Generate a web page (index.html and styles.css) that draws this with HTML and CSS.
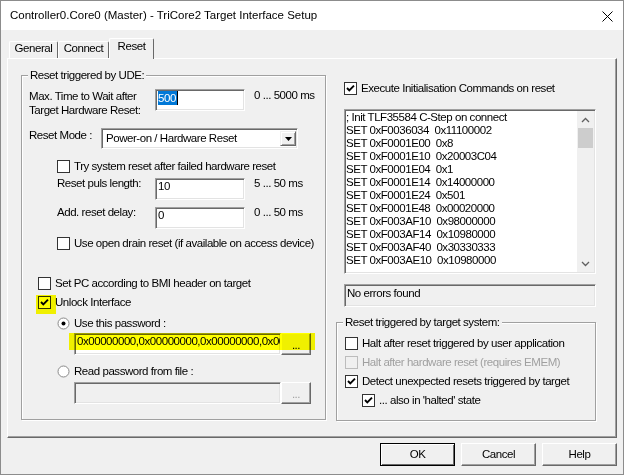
FILE: index.html
```html
<!DOCTYPE html>
<html lang="en">
  <head>
    <meta charset="UTF-8" />
    <title>TriCore2 Target Interface Setup</title>
    <link rel="stylesheet" href="styles.css">
  </head>
  <body>
    <div class="titlebar">
      <span class="title">Controller0.Core0 (Master) - TriCore2 Target Interface Setup</span>
      <svg class="close" width="11" height="11" viewBox="0 0 11 11">
        <path d="M0.5 0.5 L10.5 10.5 M10.5 0.5 L0.5 10.5" stroke="#000" stroke-width="1" fill="none" />
      </svg>
    </div>

    <div class="client">
      <div class="tabs">
        <div class="tab tab-general">General</div>
        <div class="tab tab-connect">Connect</div>
        <div class="tab tab-reset active">Reset</div>
      </div>

      <div class="panel">
        <!-- * LEFT GROUP -->
        <div class="group group-ude">
          <div class="group-title">Reset triggered by UDE:</div>

          <div class="row r-wait">
            <span class="lbl lbl-wait">Max. Time to Wait after<br>Target Hardware Reset:</span>
            <div class="edit"><span class="selected">500</span></div>
            <span class="range">0 ... 5000 ms</span>
          </div>

          <div class="row r-mode">
            <span class="lbl lbl-mode">Reset Mode :</span>
            <div class="combo">
              <span class="combo-text">Power-on / Hardware Reset</span>
              <span class="combo-btn">
                <svg width="7" height="4" viewBox="0 0 7 4"><path d="M0 0 H7 L3.5 4 Z" fill="#000" /></svg>
              </span>
            </div>
          </div>

          <div class="check r-try">
            <span class="cb"></span>
            <span>Try system reset after failed hardware reset</span>
          </div>

          <div class="row r-puls">
            <span class="lbl lbl-sub">Reset puls length:</span>
            <div class="edit"><span>10</span></div>
            <span class="range">5 ... 50 ms</span>
          </div>

          <div class="row r-delay">
            <span class="lbl lbl-sub">Add. reset delay:</span>
            <div class="edit"><span>0</span></div>
            <span class="range">0 ... 50 ms</span>
          </div>

          <div class="check r-drain">
            <span class="cb"></span>
            <span>Use open drain reset (if available on access device)</span>
          </div>

          <div class="check r-setpc">
            <span class="cb"></span>
            <span>Set PC according to BMI header on target</span>
          </div>

          <div class="check r-unlock">
            <span class="marker marker-unlock"></span>
            <span class="cb">
              <svg width="11" height="11" viewBox="0 0 11 11"><path d="M2 5 L4.3 7.4 L9 2.6" stroke="#000" stroke-width="1.9" fill="none" /></svg>
            </span>
            <span>Unlock Interface</span>
          </div>

          <div class="check r-use">
            <svg class="radio" width="13" height="13" viewBox="0 0 13 13">
              <circle cx="6.5" cy="6.5" r="5.5" fill="#fff" stroke="#8a8a8a" />
              <circle cx="6.5" cy="6.5" r="2" fill="#000" />
            </svg>
            <span>Use this password :</span>
          </div>

          <div class="field r-pass">
            <span class="marker marker-pass"></span>
            <div class="edit edit-pass"><span>0x00000000,0x00000000,0x00000000,0x00000000</span></div>
            <div class="dots">...</div>
          </div>

          <div class="check r-read">
            <svg class="radio" width="13" height="13" viewBox="0 0 13 13">
              <circle cx="6.5" cy="6.5" r="5.5" fill="#fff" stroke="#8a8a8a" />
            </svg>
            <span>Read password from file :</span>
          </div>

          <div class="field r-file">
            <div class="edit edit-pass disabled"></div>
            <div class="dots disabled">...</div>
          </div>
        </div>

        <!-- * RIGHT COLUMN -->
        <div class="side">
          <div class="check r-exec">
            <span class="cb">
              <svg width="11" height="11" viewBox="0 0 11 11"><path d="M2 5 L4.3 7.4 L9 2.6" stroke="#000" stroke-width="1.9" fill="none" /></svg>
            </span>
            <span>Execute Initialisation Commands on reset</span>
          </div>

          <div class="listbox">
            <div class="lines">; Init TLF35584 C-Step on connect
SET 0xF0036034  0x11100002
SET 0xF0001E00  0x8
SET 0xF0001E10  0x20003C04
SET 0xF0001E04  0x1
SET 0xF0001E14  0x14000000
SET 0xF0001E24  0x501
SET 0xF0001E48  0x00020000
SET 0xF003AF10  0x98000000
SET 0xF003AF14  0x10980000
SET 0xF003AF40  0x30330333
SET 0xF003AE10  0x10980000</div>
            <div class="scrollbar">
              <span class="sb-arrow">
                <svg width="9" height="6" viewBox="0 0 9 6"><path d="M1 5 L4.5 1.5 L8 5" stroke="#606060" stroke-width="1.3" fill="none" /></svg>
              </span>
              <span class="sb-thumb"></span>
              <span class="sb-track"></span>
              <span class="sb-arrow">
                <svg width="9" height="6" viewBox="0 0 9 6"><path d="M1 1 L4.5 4.5 L8 1" stroke="#606060" stroke-width="1.3" fill="none" /></svg>
              </span>
            </div>
          </div>

          <div class="status">No errors found</div>

          <div class="group group-target">
            <div class="group-title">Reset triggered by target system:</div>

            <div class="check t-row t-first">
              <span class="cb"></span>
              <span>Halt after reset triggered by user application</span>
            </div>
            <div class="check t-row disabled">
              <span class="cb"></span>
              <span>Halt after hardware reset (requires EMEM)</span>
            </div>
            <div class="check t-row">
              <span class="cb">
                <svg width="11" height="11" viewBox="0 0 11 11"><path d="M2 5 L4.3 7.4 L9 2.6" stroke="#000" stroke-width="1.9" fill="none" /></svg>
              </span>
              <span>Detect unexpected resets triggered by target</span>
            </div>
            <div class="check t-row t-sub">
              <span class="cb">
                <svg width="11" height="11" viewBox="0 0 11 11"><path d="M2 5 L4.3 7.4 L9 2.6" stroke="#000" stroke-width="1.9" fill="none" /></svg>
              </span>
              <span>... also in 'halted' state</span>
            </div>
          </div>
        </div>
      </div>

      <div class="buttons">
        <button class="btn default">OK</button>
        <button class="btn">Cancel</button>
        <button class="btn">Help</button>
      </div>
    </div>
  </body>
</html>
```

FILE: styles.css
```css
* {
  margin: 0;
  padding: 0;
  box-sizing: border-box;
}

body {
  font-family: 'Liberation Sans', Arial, sans-serif;
  font-size: 11.5px;
  letter-spacing: -0.45px;
  line-height: 13px;
  color: #000;
  width: 624px;
  height: 475px;
  border: 1px solid #8c8c8c;
  background: #f0f0f0;
  overflow: hidden;
}

/* * TITLE BAR */
.titlebar {
  height: 29px;
  background: #fff;
  display: flex;
  align-items: center;
  justify-content: space-between;
  padding: 0 10px 0 9px;
}

.title {
  font-size: 11.5px;
  letter-spacing: 0;
}

.close {
  display: block;
  margin-top: 1px;
}

/* * CLIENT AREA */
.client {
  padding: 8px 6px 0 6px;
}

.tabs {
  height: 20px;
  display: flex;
  align-items: flex-end;
  padding-left: 2px;
}

.tab {
  height: 17px;
  border-top: 1px solid #fff;
  border-left: 1px solid #fff;
  border-right: 1px solid #696969;
  border-radius: 2px 2px 0 0;
  text-align: center;
  background: #f0f0f0;
}

.tab-general { width: 49px; }
.tab-connect { width: 51px; }
.tab-reset { width: 45px; }

.tab.active {
  height: 21px;
  margin-bottom: -1px;
  padding-top: 1px;
  position: relative;
  z-index: 1;
}

.panel {
  height: 380px;
  border: 1px solid;
  border-color: #fff #696969 #696969 #fff;
  box-shadow: inset -1px -1px #a0a0a0;
  display: flex;
  gap: 10px;
  padding-left: 13px;
}

/* * GROUP BOXES */
.group {
  border: 1px solid #a0a0a0;
  box-shadow: inset 1px 1px #fff, 1px 1px #fff;
}

.group-title {
  display: table;
  margin: -8px 0 0 6px;
  padding: 0 2px;
  line-height: 15px;
  background: #f0f0f0;
}

.group-ude {
  width: 305px;
  height: 345px;
  margin-top: 16px;
}

.row {
  display: flex;
  align-items: flex-start;
}

.lbl {
  flex: none;
}

.range {
  margin-left: 9px;
}

.r-wait {
  margin-top: 6px;
  height: 28px;
  padding-left: 7px;
}

.lbl-wait {
  width: 126px;
  line-height: 14px;
}

.r-mode {
  margin-top: 11px;
  padding-left: 7px;
}

.lbl-mode {
  width: 72px;
  margin-top: 1px;
}

.r-puls,
.r-delay {
  padding-left: 35px;
}

.r-puls { margin-top: 5px; }
.r-delay { margin-top: 7px; }

.lbl-sub {
  width: 98px;
  margin-top: -1px;
}

.r-puls .range,
.r-delay .range {
  margin-top: -1px;
}

/* * EDIT FIELDS */
.edit {
  width: 90px;
  height: 22px;
  border: 1px solid;
  border-color: #a0a0a0 #fff #fff #a0a0a0;
  box-shadow: inset 1px 1px #696969, inset -1px -1px #e3e3e3;
  background: #fff;
  padding: 1px 0 0 2px;
  white-space: nowrap;
  overflow: hidden;
  flex: none;
}

.selected {
  display: inline-block;
  line-height: 14px;
  padding-right: 1px;
  background: #0078d7;
  color: #fff;
  border-right: 1px solid #000;
}

.edit.disabled {
  background: #f0f0f0;
}

.combo {
  width: 197px;
  height: 21px;
  border: 1px solid;
  border-color: #a0a0a0 #fff #fff #a0a0a0;
  box-shadow: inset 1px 1px #696969, inset -1px -1px #e3e3e3;
  background: #fff;
  display: flex;
  align-items: center;
  justify-content: space-between;
  padding: 0 1px 0 4px;
}

.combo-btn {
  width: 16px;
  height: 15px;
  border: 1px solid;
  border-color: #f0f0f0 #696969 #696969 #f0f0f0;
  box-shadow: inset 1px 1px #fff, inset -1px -1px #a0a0a0;
  background: #f0f0f0;
  display: flex;
  align-items: center;
  justify-content: center;
}

.combo-btn svg {
  display: block;
}

/* * CHECKBOXES & RADIOS */
.check {
  display: flex;
  align-items: center;
  gap: 4px;
  height: 13px;
  white-space: nowrap;
}

.cb {
  width: 13px;
  height: 13px;
  flex: none;
  border: 1px solid #333;
  background: #fff;
  display: flex;
  align-items: center;
  justify-content: center;
}

.cb svg {
  display: block;
}

.radio {
  display: block;
  flex: none;
}

.check.disabled {
  color: #a0a0a0;
}

.check.disabled .cb {
  border-color: #bcbcbc;
  background: #f0f0f0;
}

.r-try { margin-top: 11px; padding-left: 35px; }
.r-drain { margin-top: 8px; padding-left: 35px; }
.r-setpc { margin-top: 27px; padding-left: 16px; }
.r-unlock { margin-top: 6px; padding-left: 16px; position: relative; }
.r-use { margin-top: 8px; padding-left: 35px; }
.r-read { margin-top: 10px; padding-left: 35px; }

.field {
  display: flex;
  height: 22px;
  margin-left: 52px;
  position: relative;
}

.r-pass { margin-top: 3px; }
.r-file { margin-top: 4px; }

.edit-pass {
  width: 207px;
}

.dots {
  width: 30px;
  height: 22px;
  border: 1px solid;
  border-color: #fff #696969 #696969 #fff;
  box-shadow: inset -1px -1px #a0a0a0;
  background: #f0f0f0;
  text-align: center;
  line-height: 22px;
}

.dots.disabled {
  color: #a0a0a0;
}

/* highlighter marks over the screenshot */
.marker {
  position: absolute;
  background: #ffff00;
  mix-blend-mode: multiply;
  z-index: 2;
}

.marker-unlock {
  left: 14px;
  top: -1px;
  width: 20px;
  height: 19px;
}

.marker-pass {
  left: -5px;
  top: 0;
  width: 246px;
  height: 17px;
}

/* * RIGHT SIDE */
.side {
  width: 260px;
  display: flex;
  flex-direction: column;
}

.r-exec {
  margin: 23px 0 0 8px;
}

.listbox {
  width: 252px;
  height: 165px;
  margin: 14px 0 0 8px;
  border: 1px solid;
  border-color: #a0a0a0 #fff #fff #a0a0a0;
  box-shadow: inset 1px 1px #696969, inset -1px -1px #e3e3e3;
  background: #fff;
  display: flex;
  padding: 1px;
}

.lines {
  flex: 1;
  white-space: pre;
  overflow: hidden;
}

.scrollbar {
  width: 17px;
  background: #f0f0f0;
  display: flex;
  flex-direction: column;
}

.sb-arrow {
  height: 17px;
  display: flex;
  align-items: center;
  justify-content: center;
}

.sb-arrow svg {
  display: block;
}

.sb-thumb {
  height: 20px;
  margin: 0 1px;
  background: #cdcdcd;
}

.sb-track {
  flex: 1;
}

.status {
  width: 252px;
  height: 23px;
  margin: 10px 0 0 8px;
  border: 1px solid;
  border-color: #a0a0a0 #fff #fff #a0a0a0;
  box-shadow: inset 1px 1px #696969, inset -1px -1px #e3e3e3;
  padding: 2px 0 0 2px;
}

.group-target {
  height: 99px;
  margin-top: 15px;
}

.t-row {
  margin: 6px 0 0 8px;
}

.t-first {
  margin-top: 7px;
}

.t-sub {
  margin-left: 25px;
}

/* * BUTTONS */
.buttons {
  display: flex;
  justify-content: flex-end;
  gap: 6px;
  margin-top: 5px;
}

.btn {
  width: 75px;
  height: 23px;
  font: inherit;
  letter-spacing: inherit;
  color: #000;
  background: #f0f0f0;
  border: 1px solid;
  border-color: #fff #696969 #696969 #fff;
  box-shadow: inset -1px -1px #a0a0a0;
}

.btn.default {
  border-color: #000;
  box-shadow: inset 1px 1px #fff, inset -1px -1px #696969;
}
```
